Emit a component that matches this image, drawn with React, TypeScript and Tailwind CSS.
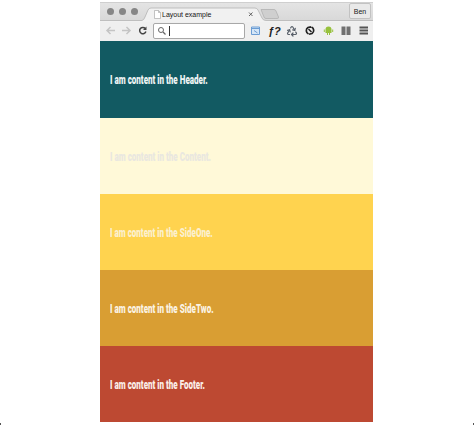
import { Recycle } from "lucide-react";

const sections = [
  { name: "Header", box: "h-[77px] bg-[#125a62]", text: "text-[#eef4f4]" },
  { name: "Content", box: "h-[76px] bg-[#fff9d8]", text: "text-[#e9e7e0]" },
  { name: "SideOne", box: "h-[76px] bg-[#ffd34f]", text: "text-[#fbf0d0]" },
  { name: "SideTwo", box: "h-[76px] bg-[#d99e33]", text: "text-[#fbf3e4]" },
  { name: "Footer", box: "h-[76px] bg-[#bd4932]", text: "text-[#fbeee8]" },
];

function TabStrip() {
  return (
    <div className="relative h-[19px] bg-linear-to-b from-[#e4e4e4] to-[#d8d8d8] border-t border-[#cfcfcf]">
      <div className="flex items-center gap-[5px] h-[17px] pl-[7px]">
        <span className="size-[7px] rounded-full bg-[#868686]" />
        <span className="size-[7px] rounded-full bg-[#868686]" />
        <span className="size-[7px] rounded-full bg-[#868686]" />
      </div>
      {/* tab shapes sit over the strip */}
      <svg
        className="absolute left-0 top-0"
        width="273"
        height="19"
        viewBox="0 0 273 19"
        fill="none"
      >
        <path d="M0 17.5H42Q44 17 45 14L48 7Q49 5 51 5H155Q157 5 158 7L162 15Q163 17.5 166 17.5H273V19H0Z" fill="#f1f1f1" />
        <path d="M0 17.5H42Q44 17 45 14L48 7Q49 5 51 5H155Q157 5 158 7L162 15Q163 17.5 166 17.5H273" stroke="#b4b4b4" strokeWidth=".8" />
        <path d="M161 6.5H174Q175.500 6.500 176 8L178.500 14Q179 15.500 177 15.500H166Q164.500 15.500 164 14Z" fill="#cfcfcf" stroke="#b1b1b1" strokeWidth=".8" />
        <path d="M54.500 7.500H58.500L60.500 9.500V15.500H54.500Z M58.500 7.500V9.500H60.500" fill="#fff" stroke="#aaa" strokeWidth=".7" />
        <path d="M149 9.500L152.500 13M152.500 9.500L149 13" stroke="#555" strokeWidth=".9" />
      </svg>
      <span className="absolute left-[62px] top-[7px] text-[7px] leading-[9px] text-[#151515] whitespace-nowrap">
        Layout example
      </span>
      <span className="absolute left-[249px] top-0 w-[22px] h-4 rounded-[2px] border border-[#c2c2c2] bg-[#e9e9e9] text-center text-[7px] leading-4 text-[#222]">
        Ben
      </span>
    </div>
  );
}

function Toolbar() {
  return (
    <div className="flex h-5 items-center bg-[#efefef]">
      <svg width="53" height="20" viewBox="0 0 53 20" fill="none">
        <path d="M7 9.500H15M10.500 6L7 9.500L10.500 13" stroke="#c4c4c4" strokeWidth="1.500" />
        <path d="M22 9.500H30M26.500 6L30 9.500L26.500 13" stroke="#c4c4c4" strokeWidth="1.500" />
        <path d="M45.300 7.500A3.200 3.200 0 1 0 45.900 10.600" stroke="#444" strokeWidth="1.500" />
        <path d="M46.500 5.500V9H43Z" fill="#444" />
      </svg>
      <div className="w-[92px] h-4 rounded-[2px] border border-[#a8a8a8] bg-white">
        <svg width="24" height="14" viewBox="0 0 24 14" fill="none">
          <circle cx="7" cy="6" r="2.500" stroke="#666" />
          <path d="M9 8L11.500 10.500" stroke="#666" strokeWidth="1.200" />
          <path d="M15.500 2V12" stroke="#333" />
        </svg>
      </div>
      <svg width="20" height="20" viewBox="0 0 20 20" fill="none">
        <path d="M6.500 6H14.500V13.500H6.500Z" fill="#d5e6f7" stroke="#6c9dd4" />
        <path d="M6.500 7.500H14.500" stroke="#6c9dd4" />
        <path d="M9 9.500L12.500 12" stroke="#6c9dd4" />
      </svg>
      <span className="w-[18px] pl-[3px] text-[11px] leading-[18px] font-bold italic text-[#222] whitespace-nowrap">
        ƒ?
      </span>
      <Recycle className="ml-[3px] mb-px size-[12px] text-[#59606a]" strokeWidth={2.4} />
      <svg width="75" height="20" viewBox="0 0 75 20" fill="none">
        <path d="M10.500 13A3.700 3.700 0 0 1 10 6.500L13 5.800M13.500 6A3.700 3.700 0 0 1 14 12.500L11 13.300" stroke="#222" strokeWidth="1.700" />
        <path d="M10.500 8L13.500 11" stroke="#222" strokeWidth="1.500" />
        <path d="M27.500 8.500A3 3 0 0 1 33.500 8.500Z M27.500 8.500H33.500V12H27.500Z" fill="#97c13c" />
        <path d="M26.300 8.500V11M34.700 8.500V11M29.500 12V14M31.500 12V14" stroke="#97c13c" />
        <path d="M43.500 5.500H47.500V14H43.500ZM48.500 5.500H52.500V14H48.500Z" fill="#707070" />
        <path d="M61.500 6.500H70M61.500 9.500H70M61.500 12.500H70" stroke="#555" strokeWidth="1.800" />
      </svg>
    </div>
  );
}

export default function App() {
  return (
    <div className="flex h-[425px] w-[474px] items-end justify-between bg-white font-['Liberation_Sans',Arial,sans-serif]">
      <span className="h-[2px] w-px bg-[#555]" />
      <main className="ml-[-1px] w-[273px] self-start pt-[2px]">
        <TabStrip />
        <Toolbar />
        {sections.map(({ name, box, text }) => (
          <section key={name} className={`${box} flex items-center pl-[10px] pt-px`}>
            <h2
              className={`${text} origin-left scale-x-[0.67] whitespace-nowrap font-['Roboto',sans-serif] text-[12px] leading-4 font-black`}
            >
              I am content in the {name}.
            </h2>
          </section>
        ))}
      </main>
      <span className="h-[2px] w-px bg-[#555]" />
    </div>
  );
}
